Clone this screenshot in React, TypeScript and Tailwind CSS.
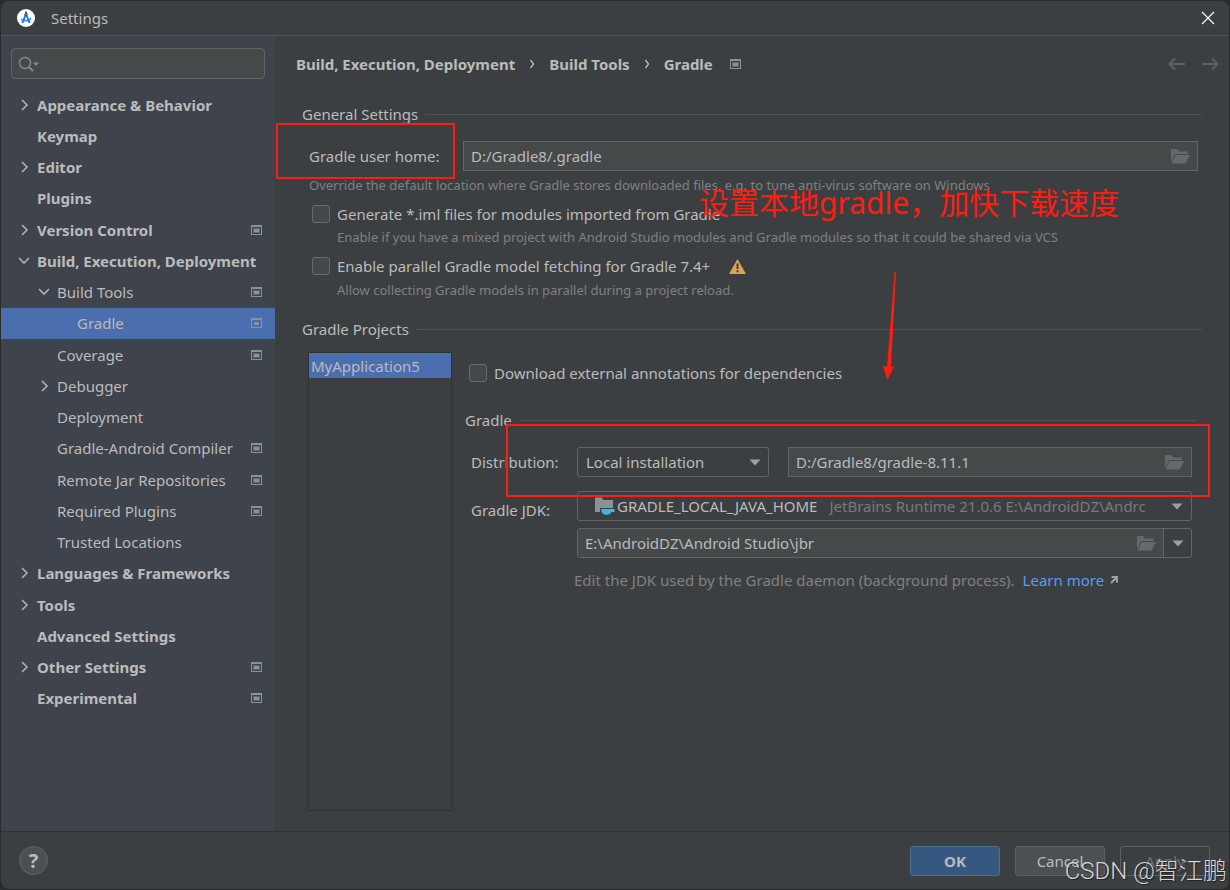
import { useState } from 'react';
import type { ReactNode } from 'react';

type TreeItem = {
  label: string;
  level: 0 | 1 | 2;
  state?: 'open' | 'closed';
  project?: boolean;
};

const treeItems: TreeItem[] = [
  { label: 'Appearance & Behavior', level: 0, state: 'closed' },
  { label: 'Keymap', level: 0 },
  { label: 'Editor', level: 0, state: 'closed' },
  { label: 'Plugins', level: 0 },
  { label: 'Version Control', level: 0, state: 'closed', project: true },
  { label: 'Build, Execution, Deployment', level: 0, state: 'open' },
  { label: 'Build Tools', level: 1, state: 'open', project: true },
  { label: 'Gradle', level: 2, project: true },
  { label: 'Coverage', level: 1, project: true },
  { label: 'Debugger', level: 1, state: 'closed' },
  { label: 'Deployment', level: 1 },
  { label: 'Gradle-Android Compiler', level: 1, project: true },
  { label: 'Remote Jar Repositories', level: 1, project: true },
  { label: 'Required Plugins', level: 1, project: true },
  { label: 'Trusted Locations', level: 1 },
  { label: 'Languages & Frameworks', level: 0, state: 'closed' },
  { label: 'Tools', level: 0, state: 'closed' },
  { label: 'Advanced Settings', level: 0 },
  { label: 'Other Settings', level: 0, state: 'closed', project: true },
  { label: 'Experimental', level: 0, project: true },
];

const indents = {
  0: 'pl-4 font-bold',
  1: 'pl-9',
  2: 'pl-14',
};

function Chevron({ state }: { state?: 'open' | 'closed' }) {
  return (
    <svg className="w-4 h-4 shrink-0" viewBox="0 0 16 16" fill="none" stroke="#afb1b3" strokeWidth="1.6">
      {state === 'closed' && <path d="M5 3L10 8L5 13" />}
      {state === 'open' && <path d="M2 5L7 10L12 5" />}
    </svg>
  );
}

function ProjectIcon() {
  return (
    <svg className="w-[11px] h-[10px] shrink-0" viewBox="0 0 11 10">
      <path fill="#87939a" fillRule="evenodd" d="M0 0H11V10H0ZM1 2V9H10V2Z" />
      <path fill="#5c666d" d="M2 3H9V8H2Z" />
      <path fill="#87939a" d="M3 4H8V7H3Z" />
    </svg>
  );
}

function FolderIcon() {
  return (
    <svg className="w-[19px] h-[15px] shrink-0" viewBox="0 0 19 15" fill="#626a6d">
      <path d="M0 13V0H6L8 2.5H16.5V5H4L0 13Z" />
      <path d="M4.5 6H19L14.5 14.5H0.5Z" />
    </svg>
  );
}

function DropArrow() {
  return (
    <svg className="w-3 h-[7px] shrink-0" viewBox="0 0 12 7">
      <path fill="#9da0a2" d="M0.5 0.5H11.5L6 6.5Z" />
    </svg>
  );
}

function CheckBox({ label, children }: { label: string; children?: ReactNode }) {
  return (
    <label className="flex items-center gap-[7px]">
      <input
        type="checkbox"
        className="appearance-none w-[18px] h-[18px] rounded-[3px] border border-[#6b6b6b] bg-[#43494a] checked:bg-[#4b6eaf]"
      />
      {label}
      {children}
    </label>
  );
}

function GroupTitle({ title }: { title: string }) {
  return (
    <div className="flex items-center gap-2 h-6">
      <h2>{title}</h2>
      <div className="flex-1 h-px bg-[#515456]" />
    </div>
  );
}

function App() {
  const [selected, setSelected] = useState('Gradle');
  const [userHome, setUserHome] = useState('D:/Gradle8/.gradle');
  const [gradlePath, setGradlePath] = useState('D:/Gradle8/gradle-8.11.1');
  const [jdkPath, setJdkPath] = useState('E:\\AndroidDZ\\Android Studio\\jbr');

  return (
    <div className="min-h-screen flex p-px bg-[#2b2b2b] text-[15px] leading-5 text-[#bbbbbb] font-['Noto_Sans','Noto_Sans_CJK_SC',sans-serif]">
      <div className="relative flex-1 flex flex-col rounded-lg bg-[#3c3f41] overflow-hidden">
        {/* Title bar */}
        <header className="flex items-center h-[35px] pl-4 pr-3.5 border-b border-[#515456]">
          <svg className="w-[18px] h-[18px]" viewBox="0 0 18 18" fill="none">
            <circle cx="9" cy="9" r="9" fill="#ffffff" />
            <path d="M4 10.3C7 12 11 12 14 10.3" stroke="#4a90f5" strokeWidth="1.7" />
            <path d="M8.8 5.5L5.4 14M9.2 5.5L12.6 14" stroke="#2f78ee" strokeWidth="2" />
            <path d="M9 2.5V5" stroke="#263c5c" strokeWidth="1.6" />
            <circle cx="9" cy="5.5" r="1.6" fill="#263c5c" />
            <circle cx="9" cy="5.6" r="0.6" fill="#ffffff" />
            <circle cx="13.3" cy="9.2" r="1" fill="#3ddc84" />
          </svg>
          <h1 className="ml-4 flex-1">Settings</h1>
          <button aria-label="Close">
            <svg className="w-3.5 h-3.5" viewBox="0 0 14 14" stroke="#ffffff" strokeWidth="1.1">
              <path d="M1 1L13 13M13 1L1 13" />
            </svg>
          </button>
        </header>

        <div className="flex-1 flex">
          {/* Settings tree */}
          <aside className="w-[274px] shrink-0 bg-[#3e434c]">
            <div className="flex items-center gap-px mt-3 mb-2.5 mx-2.5 h-[31px] px-1.5 rounded-sm border border-[#646464] bg-[#45494a]">
              <svg className="w-[22px] h-4 shrink-0" viewBox="0 0 22 16" fill="none">
                <circle cx="7" cy="7" r="5.5" stroke="#7f8b91" strokeWidth="1.4" />
                <path d="M11 11L15 15" stroke="#7f8b91" strokeWidth="1.8" />
                <path d="M15 6.5H21L18 10Z" fill="#7f8b91" />
              </svg>
              <input type="search" aria-label="Search settings" className="flex-1 min-w-0 bg-transparent outline-none" />
            </div>
            <ul className="grid auto-rows-fr h-[625px]">
              {treeItems.map((item) => (
                <li key={item.label} className="flex">
                  <button
                    onClick={() => setSelected(item.label)}
                    className={`flex-1 flex items-center pr-[13px] text-left whitespace-nowrap ${indents[item.level]} ${
                      selected === item.label ? 'bg-[#4b6eaf]' : ''
                    }`}
                  >
                    <Chevron state={item.state} />
                    <span className="flex-1 ml-1">{item.label}</span>
                    {item.project && <ProjectIcon />}
                  </button>
                </li>
              ))}
            </ul>
          </aside>

          <main className="flex-1 min-w-0 flex flex-col">
            {/* Breadcrumbs */}
            <div className="flex items-center h-14 pl-[21px] pr-2.5">
              <nav className="flex-1 flex items-center gap-[13px] font-bold">
                <span>Build, Execution, Deployment</span>
                <svg className="w-2 h-3" viewBox="0 0 8 12" fill="none" stroke="#bbbbbb" strokeWidth="1.3">
                  <path d="M2.5 2L5.5 6L2.5 10" />
                </svg>
                <span>Build Tools</span>
                <svg className="w-2 h-3" viewBox="0 0 8 12" fill="none" stroke="#bbbbbb" strokeWidth="1.3">
                  <path d="M2.5 2L5.5 6L2.5 10" />
                </svg>
                <span className="mr-1">Gradle</span>
                <ProjectIcon />
              </nav>
              <div className="flex gap-4">
                <button aria-label="Back">
                  <svg className="w-[18px] h-3.5" viewBox="0 0 18 14" fill="none" stroke="#5d6062" strokeWidth="2">
                    <path d="M18 7H3M8 1.5L2.5 7L8 12.5" />
                  </svg>
                </button>
                <button aria-label="Forward">
                  <svg className="w-[18px] h-3.5" viewBox="0 0 18 14" fill="none" stroke="#5d6062" strokeWidth="2">
                    <path d="M1 7H16M11 1.5L16.5 7L11 12.5" />
                  </svg>
                </button>
              </div>
            </div>

            <div className="flex-1 flex flex-col px-[27px] pt-2.5 pb-5">
              <section>
                <GroupTitle title="General Settings" />
                <div className="pl-[7px]">
                  <div className="mr-1 mt-[15px] flex items-center">
                    <label htmlFor="user-home" className="w-[154px] shrink-0">
                      Gradle user home:
                    </label>
                    <div className="flex-1 flex items-center h-[30px] px-[7px] border border-[#646464] bg-[#45494a]">
                      <input
                        id="user-home"
                        value={userHome}
                        onChange={(e) => setUserHome(e.target.value)}
                        className="flex-1 min-w-0 bg-transparent outline-none"
                      />
                      <button aria-label="Browse user home">
                        <FolderIcon />
                      </button>
                    </div>
                  </div>
                  <p className="mt-1 text-[13px] text-[#7f8182] whitespace-nowrap">
                    Override the default location where Gradle stores downloaded files, e.g. to tune anti-virus software on Windows
                  </p>
                  <div className="mt-[9px] pl-[3px]">
                    <CheckBox label="Generate *.iml files for modules imported from Gradle" />
                    <p className="mt-[3px] pl-[25px] text-[13px] text-[#7f8182]">
                      Enable if you have a mixed project with Android Studio modules and Gradle modules so that it could be shared via VCS
                    </p>
                  </div>
                  <div className="mt-[9px] pl-[3px]">
                    <CheckBox label="Enable parallel Gradle model fetching for Gradle 7.4+">
                      <svg className="w-[17px] h-[15px] ml-3" viewBox="0 0 17 15">
                        <path fill="#dca54c" d="M8.5 0L17 15H0Z" />
                        <path fill="#3c3f41" d="M7.5 4.5H9.5V10H7.5ZM7.5 11.2H9.5V13.2H7.5Z" />
                      </svg>
                    </CheckBox>
                    <p className="mt-1 pl-[25px] text-[13px] text-[#7f8182]">
                      Allow collecting Gradle models in parallel during a project reload.
                    </p>
                  </div>
                </div>
              </section>

              <section className="flex-1 flex flex-col mt-[17px]">
                <GroupTitle title="Gradle Projects" />
                <div className="flex-1 flex gap-[13px] pl-1.5 mt-[11px]">
                  <ul className="w-[144px] shrink-0 border border-[#2f3133]">
                    <li className="h-[25px] pt-[3px] pl-0.5 bg-[#4b6eaf]">MyApplication5</li>
                  </ul>

                  <div className="flex-1 min-w-0 pr-1.5">
                    <div className="mt-[11px] pl-1">
                      <CheckBox label="Download external annotations for dependencies" />
                    </div>
                    <div className="mt-[25px]">
                      <GroupTitle title="Gradle" />
                    </div>
                    <div className="grid grid-cols-[106px_1fr] items-center gap-y-3.5 pl-1.5 pr-1 mt-[15px]">
                      <label htmlFor="distribution">Distribution:</label>
                      <div className="flex gap-[19px]">
                        <div className="relative flex items-center">
                          <select
                            id="distribution"
                            className="appearance-none w-48 h-[30px] pl-2 pr-8 rounded-[3px] border border-[#646464] bg-[#3c3f41]"
                          >
                            <option>Local installation</option>
                            <option>Wrapper</option>
                          </select>
                          <span className="absolute right-2 pointer-events-none">
                            <DropArrow />
                          </span>
                        </div>
                        <div className="flex-1 flex items-center h-[30px] px-[7px] border border-[#646464] bg-[#45494a]">
                          <input
                            aria-label="Gradle location"
                            value={gradlePath}
                            onChange={(e) => setGradlePath(e.target.value)}
                            className="flex-1 min-w-0 bg-transparent outline-none"
                          />
                          <button aria-label="Browse Gradle location">
                            <FolderIcon />
                          </button>
                        </div>
                      </div>

                      <label htmlFor="gradle-jdk" className="pt-2">Gradle JDK:</label>
                      <div className="flex items-center min-w-0 h-[30px] pl-[17px] pr-2 rounded-[3px] border border-[#646464]">
                        <svg className="w-5 h-[18px] mr-0.5 shrink-0" viewBox="0 0 20 18">
                          <path fill="#87939a" d="M0 0.5H6.5L8.5 3H18V11H5V15H0Z" />
                          <path fill="#40b6e0" d="M6 12H19.5V15H16.5C15.5 17 14 17.7 12 17.7H10.5C8 17.5 6.2 15.5 6 12Z" />
                        </svg>
                        <select id="gradle-jdk" className="appearance-none field-sizing-content shrink-0 outline-none bg-[#3c3f41]">
                          <option>GRADLE_LOCAL_JAVA_HOME</option>
                        </select>
                        <span className="ml-3 mr-2 flex-1 overflow-hidden whitespace-nowrap text-[#787a7b]">
                          JetBrains Runtime 21.0.6 E:\AndroidDZ\Andrc
                        </span>
                        <DropArrow />
                      </div>
                    </div>
                    <div className="flex mt-[7px] ml-28 mr-1 h-[30px] rounded-[3px] border border-[#646464]">
                      <div className="flex-1 flex items-center px-[7px] bg-[#45494a]">
                        <input
                          aria-label="JDK path"
                          value={jdkPath}
                          onChange={(e) => setJdkPath(e.target.value)}
                          className="flex-1 min-w-0 bg-transparent outline-none"
                        />
                        <button aria-label="Browse JDK path">
                          <FolderIcon />
                        </button>
                      </div>
                      <button aria-label="Recent JDK paths" className="w-7 flex items-center justify-center border-l border-[#646464]">
                        <DropArrow />
                      </button>
                    </div>
                    <p className="flex items-center mt-3 ml-[109px] text-[#7f8182] whitespace-nowrap">
                      Edit the JDK used by the Gradle daemon (background process).
                      <a href="#learn-more" className="ml-2 flex items-center gap-1.5 text-[#589df6]">
                        Learn more
                        <svg className="w-2 h-2" viewBox="0 0 8 8" stroke="#9da0a2" strokeWidth="2" fill="none">
                          <path d="M1.5 1H7V6.5M7 1L1 7" />
                        </svg>
                      </a>
                    </p>
                  </div>
                </div>
              </section>
            </div>
          </main>
        </div>

        {/* Dialog buttons */}
        <footer className="flex items-center gap-[15px] h-[58px] pl-[18px] pr-[19px] border-t border-[#2f3133]">
          <button aria-label="Help" className="w-[29px] h-[29px] rounded-full border border-[#646464] bg-[#4c5052] text-xl font-bold leading-6">
            ?
          </button>
          <div className="flex-1" />
          <button className="w-[90px] h-[30px] rounded-[3px] border border-[#4c708c] bg-[#365880] font-bold">OK</button>
          <button className="w-[90px] h-[30px] rounded-[3px] border border-[#5e6060] bg-[#4c5052]">Cancel</button>
          <button className="w-[90px] h-[30px] rounded-[3px] border border-[#5e6060] text-[#6f7173]">Apply</button>
        </footer>

        {/* Annotations over the dialog */}
        <div className="absolute left-[275px] top-[122px] w-[179px] h-14 border-2 border-[#ff1d12] pointer-events-none" />
        <div className="absolute left-[505px] top-[423px] w-[704px] h-[73px] border-2 border-[#ff1d12] pointer-events-none" />
        <p className="absolute left-[698px] top-[182px] text-[30px] leading-10 whitespace-nowrap text-[#ff1d12] pointer-events-none">
          设置本地gradle，加快下载速度
        </p>
        <svg className="absolute left-[880px] top-[270px] w-4 h-[110px] pointer-events-none" viewBox="0 0 16 110" fill="#ff1d12">
          <path d="M13.5 1H15L10 96L13 95L6.5 109L1.5 94L6 96Z" />
        </svg>
        <p className="absolute right-0.5 bottom-0.5 text-2xl whitespace-nowrap text-[#d6d6d6] text-shadow-[1px_1px_1px_#00000080] font-[Roboto,'Noto_Sans_CJK_SC',sans-serif] font-light pointer-events-none">
          CSDN @智江鹏
        </p>
      </div>
    </div>
  );
}

export default App;
